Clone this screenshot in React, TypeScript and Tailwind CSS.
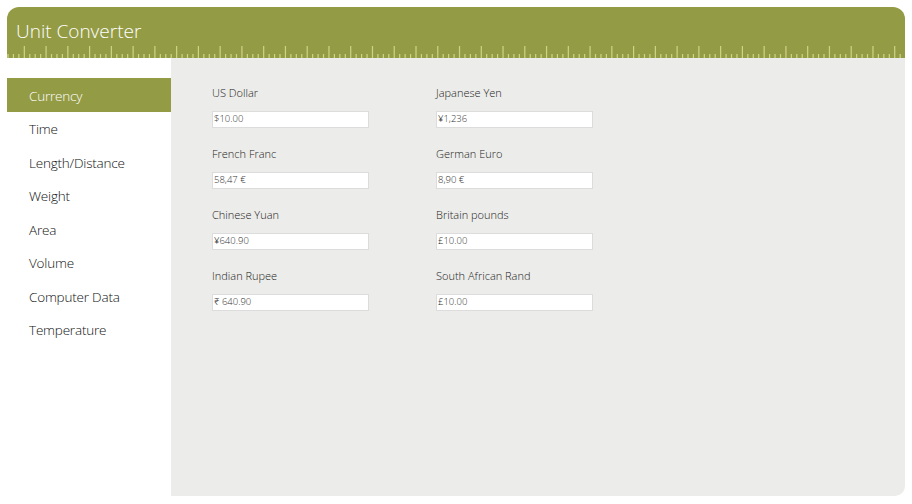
import React from "react"

const categories = [
    "Currency",
    "Time",
    "Length/Distance",
    "Weight",
    "Area",
    "Volume",
    "Computer Data",
    "Temperature",
]

const currencies = [
    { label: "US Dollar", value: "$10.00" },
    { label: "Japanese Yen", value: "¥1,236" },
    { label: "French Franc", value: "58,47 €" },
    { label: "German Euro", value: "8,90 €" },
    { label: "Chinese Yuan", value: "¥640.90" },
    { label: "Britain pounds", value: "£10.00" },
    { label: "Indian Rupee", value: "₹ 640.90" },
    { label: "South African Rand", value: "£10.00" },
]

// ruler ticks along the bottom of the header
const Ruler = () => {
    const step = 5.44
    const ticks = Array.from({ length: 166 }, (_, i) => i)
    return (
        <svg className="absolute bottom-0 left-0" width="898" height="13" viewBox="0 0 898 13">
            {ticks.map((i) => {
                const x = 0.4 + i * step
                const big = (i - 3) % 4 === 0
                return (
                    <rect
                        key={i}
                        x={x}
                        y={big ? 1 : 9}
                        width="1.2"
                        height={big ? 12 : 4}
                        fill="#cdd487"
                    />
                )
            })}
        </svg>
    )
}

export default function App() {
    return (
        <div className="h-[504px] w-[912px] bg-white p-[7px]" style={{ fontFamily: '"Open Sans", "Noto Sans", sans-serif' }}>
            <div className="flex h-[489px] w-[898px] flex-col overflow-hidden rounded-[12px] rounded-b-[10px]">
                <div className="relative h-[51px] shrink-0 bg-[#949b45]">
                    <h1 className="pl-[9px] pt-[12px] text-[19px] font-light leading-[24px] text-white">Unit Converter</h1>
                    <Ruler />
                </div>
                <div className="flex flex-1">
                    <div className="w-[164px] shrink-0 bg-white pt-[20px]">
                        {categories.map((c, i) => (
                            <div
                                key={c}
                                className={`flex h-[33.5px] items-center pl-[22px] pt-[2px] text-[13.5px] font-light tracking-[-0.2px] ${i === 0 ? "bg-[#949b45] text-white" : "text-[#111]"}`}
                            >
                                {c}
                            </div>
                        ))}
                    </div>
                    <div className="flex-1 bg-[#ececea] pl-[41px] pt-[27px]">
                        <div className="grid w-[381px] grid-cols-[157px_157px] gap-x-[67px] gap-y-[18px]">
                            {currencies.map((c) => (
                                <div key={c.label} className="flex flex-col">
                                    <span className="h-[16px] text-[11px] font-light leading-[16px] text-[#222]">{c.label}</span>
                                    <div className="mt-[10px] flex h-[17px] items-center border border-[#dcdcdc] bg-white pl-[1px] text-[9.5px] font-light text-[#333]">
                                        {c.value}
                                    </div>
                                </div>
                            ))}
                        </div>
                    </div>
                </div>
            </div>
        </div>
    )
}
